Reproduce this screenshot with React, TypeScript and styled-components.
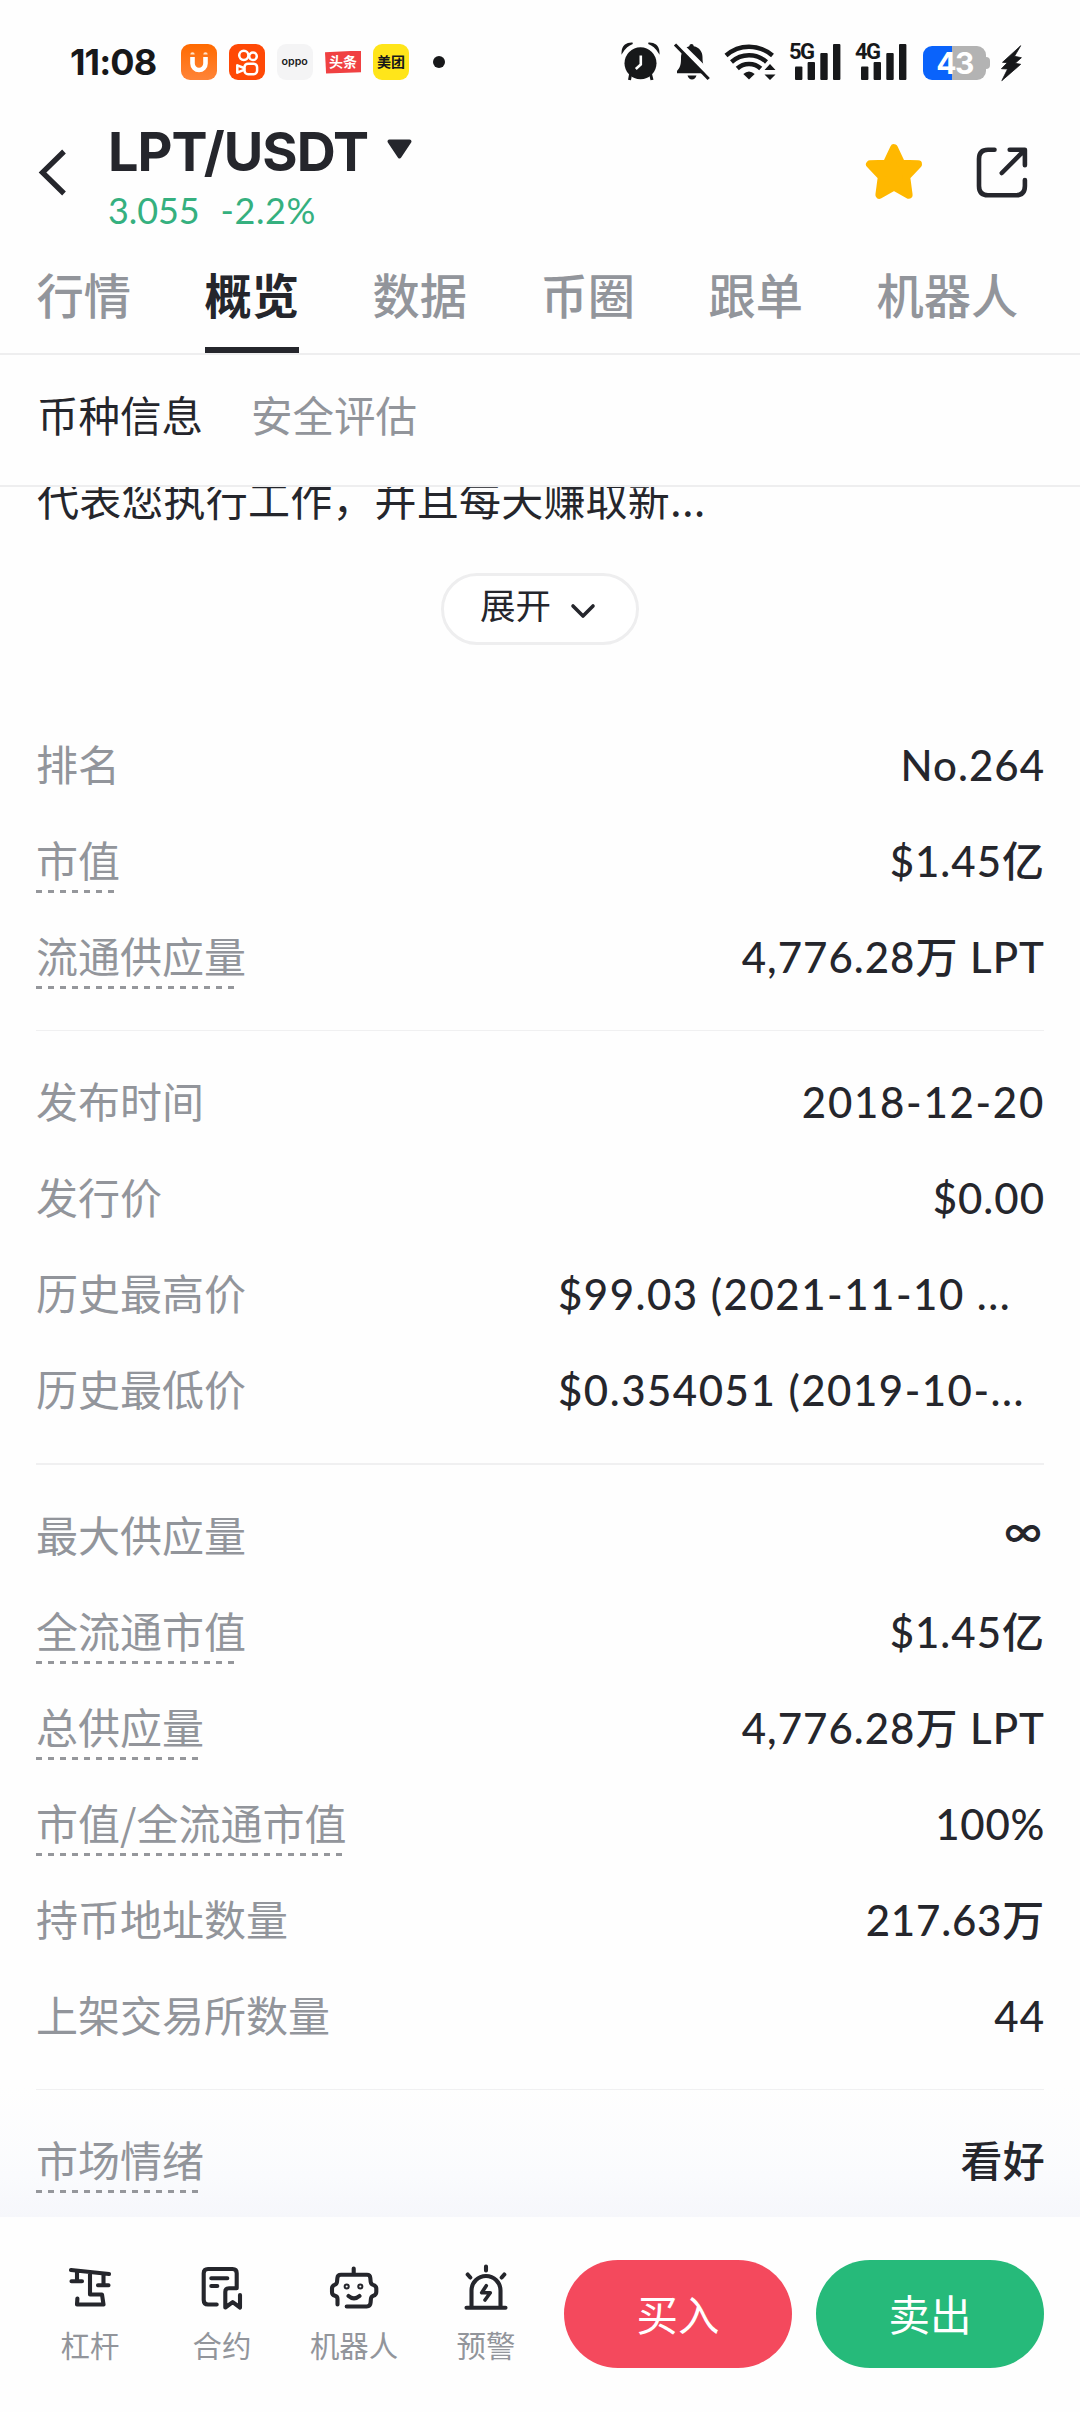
import React from 'react';
import styled, { createGlobalStyle, css } from 'styled-components';

const INK = '#25262c';
const MUTED = '#92959b';
const LINE = '#eeeeef';

const cjk = `'Noto Sans CJK SC', sans-serif`;
const inter = `Inter, 'Noto Sans CJK SC', sans-serif`;
const lato = `Lato, 'Noto Sans CJK SC', sans-serif`;

const GlobalStyle = createGlobalStyle`
  * { box-sizing: border-box; }
  body { margin: 0; background: #fefefe; color: ${INK}; font-family: ${cjk}; }
  svg { display: block; }
`;

const Screen = styled.div`
  width: 1080px;
  height: 2412px;
  display: flex;
  flex-direction: column;
  overflow: hidden;
`;

/* ---------- status bar ---------- */

const StatusBar = styled.div`
  height: 124px;
  padding: 0 56px 0 70px;
  display: flex;
  align-items: center;
  color: #17181a;
`;

const Clock = styled.div`
  width: 111px;
  font: 680 36px/40px ${inter};
  letter-spacing: -0.9px;
`;

const AppIcons = styled.div`
  display: flex;
  align-items: center;
  gap: 12px;
`;

const AppIcon = styled.div<{ $bg: string; $height?: number; $radius?: number; $tilt?: boolean }>`
  width: 36px;
  height: ${(p) => p.$height ?? 36}px;
  border-radius: ${(p) => p.$radius ?? 9}px;
  background: ${(p) => p.$bg};
  display: flex;
  align-items: center;
  justify-content: center;
  ${(p) => p.$tilt && css`clip-path: polygon(0 8%, 100% 0, 100% 95%, 3% 100%);`}
`;

const AppIconText = styled.span<{ $color: string; $size: number; $weight: number; $stretch?: number }>`
  font: ${(p) => p.$weight} ${(p) => p.$size}px/16px ${inter};
  color: ${(p) => p.$color};
  white-space: nowrap;
  transform: scaleX(${(p) => p.$stretch ?? 1});
`;

const Dot = styled.div`
  width: 12px;
  height: 12px;
  margin-left: 12px;
  border-radius: 50%;
  background: #17181a;
`;

const SystemIcons = styled.div`
  margin-left: auto;
  display: flex;
  height: 44px;
`;

const Slot = styled.div<{ $w: number }>`
  position: relative;
  width: ${(p) => p.$w}px;
  height: 44px;
`;

const NetLabel = styled.span`
  position: absolute;
  left: 1px;
  top: 1px;
  font: 700 22px/22px Roboto, sans-serif;
  letter-spacing: -1.6px;
`;

const Battery = styled.div`
  position: relative;
  width: 63px;
  height: 34px;
  margin: 6px 0 0 1px;
  border-radius: 9px;
  background: linear-gradient(90deg, #0a63fb 0 29px, #b3b3b3 29px);
  color: #fff;
  font: 700 30px/35px ${inter};
  letter-spacing: -1.6px;
  text-align: center;
  &::after {
    content: '';
    position: absolute;
    left: 63px;
    top: 11px;
    width: 4px;
    height: 12px;
    border-radius: 0 4px 4px 0;
    background: #b3b3b3;
  }
`;

/* ---------- header ---------- */

const Header = styled.header`
  height: 126px;
  padding: 0 48px 0 36px;
  display: flex;
  align-items: flex-start;
`;

const BackButton = styled.div`
  width: 72px;
  padding-top: 22px;
`;

const PairBlock = styled.div`
  display: flex;
  flex-direction: column;
`;

const PairName = styled.div`
  height: 56px;
  display: flex;
  align-items: center;
  gap: 18px;
  font: 650 54px/54px ${inter};
  letter-spacing: -1px;
  svg { margin-top: -4px; }
`;

const PriceLine = styled.div`
  height: 44px;
  margin-top: 8px;
  display: flex;
  gap: 21px;
  color: #35b07f;
  font: 400 36px/44px ${lato};
  letter-spacing: -0.1px;
  span + span { letter-spacing: 0.6px; }
`;

const HeaderActions = styled.div`
  margin-left: auto;
  padding-top: 18px;
  display: flex;
  gap: 48px;
`;

/* ---------- tabs ---------- */

const Tabs = styled.nav`
  height: 105px;
  padding-left: 36.5px;
  display: flex;
  gap: 73.5px;
  border-bottom: 2px solid ${LINE};
`;

const Tab = styled.div<{ $active?: boolean }>`
  display: flex;
  flex-direction: column;
  justify-content: space-between;
  padding-top: 9px;
  font: ${(p) => (p.$active ? 700 : 500)} 47.25px/69px ${cjk};
  color: ${(p) => (p.$active ? INK : MUTED)};
  &::after {
    content: '';
    height: 6px;
    background: ${(p) => (p.$active ? INK : 'transparent')};
  }
`;

const SubTabs = styled.nav`
  height: 132px;
  flex: none;
  padding: 0 37px;
  display: flex;
  gap: 48px;
  border-bottom: 2px solid ${LINE};
`;

const SubTab = styled.div<{ $active?: boolean }>`
  font: 400 41.5px/118px ${cjk};
  color: ${(p) => (p.$active ? INK : MUTED)};
`;

/* ---------- body ---------- */

const Body = styled.main`
  height: 1730px;
  flex: none;
  overflow: hidden;
  padding: 0 36px;
  display: flex;
  flex-direction: column;
  background: linear-gradient(180deg, #fefefe 0 1600px, #fafbfd 1690px, #f6f7fb 1730px);
`;

const Description = styled.p`
  margin: -21px 0 0;
  padding-left: 1px;
  font: 400 42px/64px ${cjk};
  letter-spacing: 0.2px;
`;

const ExpandButton = styled.div`
  align-self: center;
  width: 198px;
  height: 72px;
  margin: 43px 0 73px;
  flex: none;
  display: flex;
  align-items: center;
  justify-content: center;
  gap: 19px;
  padding-right: 4px;
  border: 3px solid ${LINE};
  border-radius: 36px;
  background: #fff;
  font: 400 35.5px/60px ${cjk};
  span { margin-top: -11px; }
  svg { margin-top: 3px; }
`;

const Section = styled.section`
  display: flex;
  flex-direction: column;
  flex: none;
`;

const Divider = styled.div<{ $height: number }>`
  height: ${(p) => p.$height}px;
  flex: none;
  margin: 24px 0;
  background: #f0f0f1;
`;

const Row = styled.div`
  height: 96px;
  flex: none;
  display: flex;
  justify-content: space-between;
`;

const Label = styled.div<{ $dashes?: number }>`
  position: relative;
  font: 400 42px/90px ${cjk};
  color: ${MUTED};
  &::after {
    content: '';
    position: absolute;
    left: 0;
    top: 76px;
    width: ${(p) => (p.$dashes ?? 0) * 12}px;
    height: 3px;
    background: repeating-linear-gradient(90deg, #95979b 0 6px, transparent 6px 12px);
  }
`;

const Value = styled.div<{ $cut?: boolean; $track?: number; $symbol?: boolean }>`
  font: 500 42px/94px ${(p) => (p.$symbol ? inter : lato)};
  letter-spacing: ${(p) => p.$track ?? 1}px;
  white-space: nowrap;
  margin-right: -1px;
  ${(p) => p.$cut && css`width: 487px;`}
  ${(p) => p.$symbol && css`margin-top: -4px; font-size: 40px;`}
`;

/* ---------- bottom bar ---------- */

const BottomBar = styled.footer`
  height: 195px;
  flex: none;
  padding: 41px 36px 0 24px;
  display: flex;
  align-items: flex-start;
  background: #fefefe;
`;

const Tool = styled.div`
  width: 132px;
  display: flex;
  flex-direction: column;
  align-items: center;
  font: 400 29.4px/40px ${cjk};
  color: ${MUTED};
  svg { margin-bottom: 6px; }
`;

const TradeButtons = styled.div`
  margin: 2px 0 0 12px;
  display: flex;
  gap: 24px;
`;

const TradeButton = styled.div<{ $bg: string }>`
  width: 228px;
  height: 108px;
  border-radius: 54px;
  background: ${(p) => p.$bg};
  color: #fff;
  text-align: center;
  font: 400 41.5px/107px ${cjk};
`;

/* ---------- icons ---------- */

const StrokeIcon = ({ size = 60, width = 4.1, children }: { size?: number; width?: number; children: React.ReactNode }) => (
  <svg
    width={size}
    height={size}
    viewBox={`0 0 ${size} ${size}`}
    fill="none"
    stroke={INK}
    strokeWidth={width}
    strokeLinecap="round"
    strokeLinejoin="round"
  >
    {children}
  </svg>
);

const LeverIcon = () => (
  <StrokeIcon>
    <path d="M11 12 49 16M17 14v9.300M11.500 23.300h10.500M43.500 17v10.300M38 27.300h10.500M30 14.500v22h12l1.500 10H17l.4-6" />
  </StrokeIcon>
);

const ContractIcon = () => (
  <StrokeIcon>
    <path d="M24.700 46.500H16q-4.300 0-4.300-4.500V15.200q0-4.200 4.300-4.200h24.500q4.200 0 4.200 4.200V30.300H37q-3.700 0-3.700 3.500v15.700l7.400-5.300 7.300 5.300V37M19.300 20.200h16M19.300 28h6" />
  </StrokeIcon>
);

const RobotIcon = () => (
  <StrokeIcon>
    <path d="M29.700 10.500v6M13.500 46.500V41q0-2.500-2.500-3.200-3-.8-3-3.600v-3.600q0-2.800 2.600-3.700 2.200-.8 2.400-3l.4-4q.3-3.200 3.600-3.200h26q3 0 3.300 3.200l.4 4q.2 2.200 2.400 3 3.200.9 3.200 3.700v3.400q0 2.800-3.200 3.900-2 .8-2.200 3l-.3 3.800q-.3 3.800-3.900 3.800h-20M24.500 38q5.500 4.800 11 0" />
    <circle cx="22.700" cy="28.500" r="1" />
    <circle cx="36.300" cy="28.500" r="1" />
  </StrokeIcon>
);

const SirenIcon = () => (
  <StrokeIcon>
    <path d="M30 8.500v4M11.700 16.500l2.600 3M48.300 16.500l-2.600 3M15.500 49V32.500a14.500 14.500 0 0 1 29 0V49M10.500 49.700h39" />
    <path d="M30.300 27.700 25.700 34.700h8.600L29 42" strokeWidth="3.600" />
  </StrokeIcon>
);

const ShareIcon = () => (
  <StrokeIcon width={4.6}>
    <path d="M22.500 7.800H16Q7 7.800 7 17v27q0 9.300 9 9.300h27.700q9.200 0 9.200-9.300v-6M37.700 7.800h15.200v15.500M29.800 31 52 8.700" />
  </StrokeIcon>
);

const StarIcon = () => (
  <svg width="60" height="60" viewBox="0 0 60 60">
    <path
      d="M30 6.200 37.300 21.800 54 22.300 42.200 34.700 44.600 52.700 30 44.500 15.400 52.700 17.800 34.700 6 22.300 22.700 21.800Z"
      fill="#ffb800"
      stroke="#ffb800"
      strokeWidth="8"
      strokeLinejoin="round"
    />
  </svg>
);

const BackIcon = () => (
  <svg width="36" height="52" viewBox="0 0 36 52" fill="none" stroke={INK} strokeWidth="5.300">
    <path d="M28 5.500 6.500 26.500l21.500 21" />
  </svg>
);

const CaretIcon = () => (
  <svg width="28" height="24" viewBox="0 0 28 24">
    <path d="M3.500 3.500h20L13.500 18.500Z" fill={INK} stroke={INK} strokeWidth="4" strokeLinejoin="round" />
  </svg>
);

const ChevronDown = () => (
  <StrokeIcon size={26} width={3.6}>
    <path d="M3 8l10 10L23 8" />
  </StrokeIcon>
);

const AlarmIcon = () => (
  <svg width="44" height="44" viewBox="0 0 44 44" fill="none" stroke="#17181a">
    <circle cx="20.500" cy="23.300" r="16" fill="#17181a" stroke="none" />
    <path d="M11 32 9.500 40M30 32l2 8" strokeWidth="3" />
    <path d="M2.300 12C2.500 6 7 2.800 12.500 3.200 8 5 5 7.500 2.300 12ZM38.700 12C38.500 6 34 2.800 28.500 3.200 33 5 36 7.500 38.700 12Z" fill="#17181a" strokeWidth="1.500" />
    <path d="M20.800 15.500v9L15.800 29" stroke="#fff" strokeWidth="2.600" />
  </svg>
);

const BellOffIcon = () => (
  <svg width="44" height="44" viewBox="0 0 44 44">
    <path d="M19.500 4q2 0 2.300 2.300C27.500 7.500 30.500 12 30.500 17c0 7 1 9 4.500 13v3.300H5V31c3.500-4 4-7 4-13 0-6 3-10.300 8.200-11.700Q17.500 4 19.500 4ZM15.500 35.500h9q-1.300 4-4.500 4t-4.500-4Z" fill="#17181a" />
    <path d="M4.500 1 40 36.500" stroke="#fefefe" strokeWidth="5.500" />
    <path d="M3 4.500 36.700 39" stroke="#17181a" strokeWidth="3.200" />
  </svg>
);

const WifiIcon = () => (
  <svg width="56" height="44" viewBox="0 0 56 44" fill="none" stroke="#17181a" strokeWidth="4.500">
    <path d="M4 15.500Q14 6.700 27 6.700T50.500 15.500M9.500 22Q17 15.300 27 15.300T44.500 22M15.300 28.500Q20 24 27 24T38.700 28.500" />
    <path d="M27 39.500 21.300 34Q27 29 32.700 34Z" fill="#17181a" stroke="none" />
    <path d="M42.500 30h11L48 24ZM42.500 34.500h11L48 40Z" fill="#17181a" stroke="none" />
  </svg>
);

const SignalBars = () => (
  <svg width="56" height="44" viewBox="0 0 56 44" fill="#17181a">
    <rect x="7" y="26.500" width="7.400" height="13.500" rx="1" />
    <rect x="19.600" y="22" width="7.400" height="18" rx="1" />
    <rect x="32.300" y="13" width="7.400" height="27" rx="1" />
    <rect x="45" y="4" width="7.400" height="36" rx="1" />
  </svg>
);

const BoltIcon = () => (
  <svg width="26" height="44" viewBox="0 0 26 44">
    <path
      d="M22.700 5.700 4.500 22.300 9.300 22.700 3.400 28.700 9.600 29 3.800 40.700 22.700 24.300 17.200 23.300 23.400 17.700 16.500 16.300Z"
      fill="#17181a"
      stroke="#17181a"
      strokeWidth="0.800"
    />
  </svg>
);

const UIcon = () => (
  <svg width="36" height="36" viewBox="0 0 36 36" fill="none" stroke="#fff">
    <path d="M11.500 13v6.500a6.500 6.500 0 0 0 13 0V13" strokeWidth="4.600" />
    <path d="M9.300 10.500a2.200 2.200 0 0 1 4.400 0ZM22.300 10.500a2.200 2.200 0 0 1 4.400 0Z" fill="#ffe3c8" stroke="none" />
  </svg>
);

const CameraIcon = () => (
  <svg width="36" height="36" viewBox="0 0 36 36" fill="none" stroke="#fff" strokeWidth="2.500" strokeLinejoin="round">
    <circle cx="14.800" cy="11.300" r="4.600" />
    <circle cx="24" cy="12.300" r="3.800" />
    <rect x="15.500" y="19.700" width="12.600" height="10.500" rx="3.500" />
    <path d="M8.300 21.300v7.400L15 25.800V24Z" />
  </svg>
);

/* ---------- data ---------- */

type Item = { label: string; value: string; dashes?: number; cut?: boolean; track?: number; symbol?: boolean };

const sections: Item[][] = [
  [
    { label: '排名', value: 'No.264' },
    { label: '市值', value: '$1.45亿', dashes: 7 },
    { label: '流通供应量', value: '4,776.28万 LPT', dashes: 17 },
  ],
  [
    { label: '发布时间', value: '2018-12-20', track: 1.7 },
    { label: '发行价', value: '$0.00' },
    { label: '历史最高价', value: '$99.03 (2021-11-10 ...', cut: true, track: 1.5 },
    { label: '历史最低价', value: '$0.354051 (2019-10-...', cut: true, track: 1.5 },
  ],
  [
    { label: '最大供应量', value: '∞', symbol: true, track: 3 },
    { label: '全流通市值', value: '$1.45亿', dashes: 17 },
    { label: '总供应量', value: '4,776.28万 LPT', dashes: 14 },
    { label: '市值/全流通市值', value: '100%', dashes: 26, track: 0.7 },
    { label: '持币地址数量', value: '217.63万', track: 0.8 },
    { label: '上架交易所数量', value: '44' },
  ],
  [{ label: '市场情绪', value: '看好', dashes: 14, track: 0.3 }],
];

const tabs = ['行情', '概览', '数据', '币圈', '跟单', '机器人'];

const tools = [
  { label: '杠杆', icon: <LeverIcon /> },
  { label: '合约', icon: <ContractIcon /> },
  { label: '机器人', icon: <RobotIcon /> },
  { label: '预警', icon: <SirenIcon /> },
];

export default function App() {
  return (
    <Screen>
      <GlobalStyle />
      <StatusBar>
        <Clock>11:08</Clock>
        <AppIcons>
          <AppIcon $bg="linear-gradient(180deg, #ff6a00, #ff8438)"><UIcon /></AppIcon>
          <AppIcon $bg="#ff4906"><CameraIcon /></AppIcon>
          <AppIcon $bg="#f4f4f5"><AppIconText $color="#17181a" $size={9.5} $weight={600} $stretch={1.12}>oppo</AppIconText></AppIcon>
          <AppIcon $bg="#f04142" $height={23} $radius={0} $tilt><AppIconText $color="#fff" $size={14} $weight={700}>头条</AppIconText></AppIcon>
          <AppIcon $bg="#ffe51a"><AppIconText $color="#17181a" $size={14} $weight={700}>美团</AppIconText></AppIcon>
          <Dot />
        </AppIcons>
        <SystemIcons>
          <Slot $w={52}><AlarmIcon /></Slot>
          <Slot $w={50}><BellOffIcon /></Slot>
          <Slot $w={66}><WifiIcon /></Slot>
          <Slot $w={66}><SignalBars /><NetLabel>5G</NetLabel></Slot>
          <Slot $w={68}><SignalBars /><NetLabel>4G</NetLabel></Slot>
          <Slot $w={76}><Battery>43</Battery></Slot>
          <Slot $w={26}><BoltIcon /></Slot>
        </SystemIcons>
      </StatusBar>

      <Header>
        <BackButton><BackIcon /></BackButton>
        <PairBlock>
          <PairName>LPT/USDT<CaretIcon /></PairName>
          <PriceLine><span>3.055</span><span>-2.2%</span></PriceLine>
        </PairBlock>
        <HeaderActions>
          <StarIcon />
          <ShareIcon />
        </HeaderActions>
      </Header>

      <Tabs>
        {tabs.map((t) => (
          <Tab key={t} $active={t === '概览'}>{t}</Tab>
        ))}
      </Tabs>

      <SubTabs>
        <SubTab $active>币种信息</SubTab>
        <SubTab>安全评估</SubTab>
      </SubTabs>

      <Body>
        <Description>代表您执行工作，并且每天赚取新...</Description>
        <ExpandButton><span>展开</span><ChevronDown /></ExpandButton>
        {sections.map((rows, i) => (
          <React.Fragment key={i}>
            {i > 0 && <Divider $height={i === 2 ? 2 : 1} />}
            <Section>
              {rows.map((r) => (
                <Row key={r.label}>
                  <Label $dashes={r.dashes}>{r.label}</Label>
                  <Value $cut={r.cut} $track={r.track} $symbol={r.symbol}>{r.value}</Value>
                </Row>
              ))}
            </Section>
          </React.Fragment>
        ))}
      </Body>

      <BottomBar>
        {tools.map((t) => (
          <Tool key={t.label}>{t.icon}{t.label}</Tool>
        ))}
        <TradeButtons>
          <TradeButton $bg="#f4495d">买入</TradeButton>
          <TradeButton $bg="#26ba7a">卖出</TradeButton>
        </TradeButtons>
      </BottomBar>
    </Screen>
  );
}
